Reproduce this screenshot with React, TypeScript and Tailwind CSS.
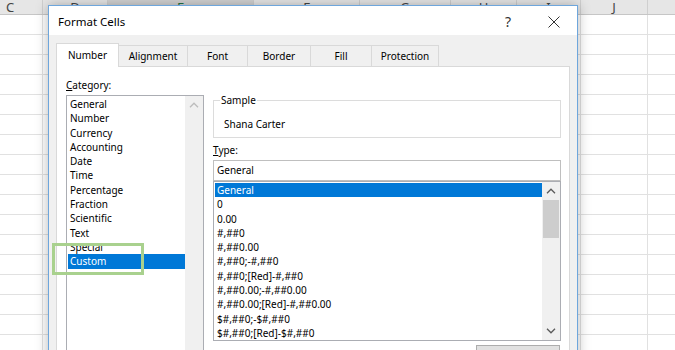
import React from 'react'
import clsx from 'clsx'

const columns = [
  { label: 'C', w: 'w-[43px]', left: true },
  { label: 'D', w: 'w-[65px]' },
  { label: 'E', w: 'w-[146px]', selected: true },
  { label: 'F', w: 'w-[106px]' },
  { label: 'G', w: 'w-[91px]' },
  { label: 'H', w: 'w-[66px]' },
  { label: 'I', w: 'w-[64px]' },
  { label: 'J', w: 'w-[67px]' },
  { label: 'K', w: 'w-[80px]' },
]

const tabs = [
  { label: 'Number', w: 'w-[63px]', active: true },
  { label: 'Alignment', w: 'w-[69px]' },
  { label: 'Font', w: 'w-[60px]' },
  { label: 'Border', w: 'w-[63px]' },
  { label: 'Fill', w: 'w-[61px]' },
  { label: 'Protection', w: 'w-[67px]' },
]

const categories = [
  'General', 'Number', 'Currency', 'Accounting', 'Date', 'Time',
  'Percentage', 'Fraction', 'Scientific', 'Text', 'Special', 'Custom',
]

const types = [
  'General', '0', '0.00', '#,##0', '#,##0.00', '#,##0;-#,##0',
  '#,##0;[Red]-#,##0', '#,##0.00;-#,##0.00', '#,##0.00;[Red]-#,##0.00',
  '$#,##0;-$#,##0', '$#,##0;[Red]-$#,##0', '$#,##0.00;-$#,##0.00',
]

const rows = Array.from({ length: 17 }, (_, i) => i)

function Chevron({ up, className }: { up?: boolean; className?: string }) {
  return (
    <svg width="10" height="6" viewBox="0 0 10 6" className={className}>
      <polyline
        points={up ? '1,5.2 5,1.2 9,5.2' : '1,0.8 5,4.8 9,0.8'}
        fill="none"
        stroke="currentColor"
        strokeWidth="1.3"
      />
    </svg>
  )
}

function Sheet() {
  return (
    <div>
      <div className="flex h-[15px] border-b border-[#c6c6c6] bg-[#e6e6e6]">
        {columns.map((c) => (
          <div
            key={c.label}
            className={clsx(
              c.w,
              'flex shrink-0 items-center border-r border-[#cfcfcf] text-[13px] leading-[14px] text-[#444]',
              c.left ? 'pl-[6px]' : 'justify-center',
              c.selected && 'bg-[#d2d2d2] text-[#217346]'
            )}
          >
            {c.label}
          </div>
        ))}
      </div>
      {rows.map((r) => (
        <div key={r} className="flex h-[20px] border-b border-[#e1e1e1]">
          {columns.map((c) => (
            <div key={c.label} className={clsx(c.w, 'shrink-0 border-r border-[#e1e1e1]')} />
          ))}
        </div>
      ))}
    </div>
  )
}

function ListBox({
  items,
  selected,
  className,
  arrowColor,
  thumb,
}: {
  items: string[]
  selected: number
  className?: string
  arrowColor: string
  thumb?: boolean
}) {
  return (
    <div className={clsx('flex overflow-hidden border border-[#abadb3] bg-white', className)}>
      <div className="flex-1 pl-[1px] pt-[1px]">
        {items.map((item, i) => (
          <div
            key={item}
            className={clsx(
              'h-[14.3px] whitespace-nowrap pl-[2px] leading-[14.3px]',
              i === selected ? 'bg-[#0078d7] text-white' : 'text-black'
            )}
          >
            {item}
          </div>
        ))}
      </div>
      <div className="flex w-[18px] shrink-0 flex-col bg-[#f0f0f0]">
        <div className="flex h-[18px] items-center justify-center">
          <Chevron up className={arrowColor} />
        </div>
        {thumb && <div className="mx-[1px] h-[38px] bg-[#cdcdcd]" />}
        <div className="flex-1" />
        {thumb && (
          <div className="flex h-[18px] items-center justify-center">
            <Chevron className={arrowColor} />
          </div>
        )}
      </div>
    </div>
  )
}

function NumberPanel() {
  return (
    <div className="flex flex-1 border border-[#d9d9d9] bg-white pl-[9px]">
      <div className="flex w-[138px] shrink-0 flex-col">
        <div className="mt-[11px] leading-[14px]">
          <span className="underline">C</span>ategory:
        </div>
        <ListBox
          items={categories}
          selected={11}
          className="mt-[3px] h-[300px]"
          arrowColor="text-[#bcbcbc]"
        />
      </div>
      <div className="ml-[9px] flex w-[348px] shrink-0 flex-col">
        <fieldset className="mt-[26px] border border-[#dcdcdc] pb-[6px] pl-[6px]">
          <legend className="px-[1px] leading-[14px]">Sample</legend>
          <div className="pl-[4px] pt-[10px] leading-[14px]">Shana Carter</div>
        </fieldset>
        <div className="mt-[5px] leading-[14px]">
          <span className="underline">T</span>ype:
        </div>
        <div className="mt-[3px] flex h-[21px] items-center border border-[#bfbfbf] pl-[3px]">
          General
        </div>
        <ListBox
          items={types}
          selected={0}
          className="h-[160px] border-[#a5a5a5]"
          arrowColor="text-[#5a5a5a]"
          thumb
        />
        <div className="mt-[4px] flex justify-end pr-[1px]">
          <div className="h-[23px] w-[84px] border border-[#adadad] bg-[#e1e1e1]" />
        </div>
      </div>
    </div>
  )
}

function FormatCellsDialog() {
  return (
    <div className="absolute left-[48px] top-[5px] flex h-[420px] w-[530px] flex-col border border-[#6ea6dc] bg-[#f0f0f0] shadow-[0_0_12px_rgba(0,0,0,0.28)]">
      <div className="flex h-[29px] shrink-0 items-center bg-white">
        <span className="pl-[9px] pt-[2px] text-[11.5px] text-black">Format Cells</span>
        <div className="ml-auto flex h-full">
          <div className="flex w-[46px] items-center justify-center pt-[2px] text-[14px] text-[#333]">?</div>
          <div className="flex w-[46px] items-center justify-center pt-[2px]">
            <svg width="12" height="12" viewBox="0 0 12 12">
              <path d="M0.5 0.5L11.5 11.5M11.5 0.5L0.5 11.5" stroke="#333" strokeWidth="1" />
            </svg>
          </div>
        </div>
      </div>
      <div className="flex flex-1 flex-col px-[7px] pt-[8px] text-[10px]">
        <div className="flex h-[23px] shrink-0 items-end">
          {tabs.map((t, i) => (
            <div
              key={t.label}
              className={clsx(
                t.w,
                'flex shrink-0 items-center justify-center border-r border-t border-[#d9d9d9] text-black',
                i === 0 && 'border-l',
                t.active
                  ? 'relative z-10 -mb-px h-[24px] bg-white pb-[1px]'
                  : 'h-[21px] bg-[#f0f0f0] pt-[1px]'
              )}
            >
              {t.label}
            </div>
          ))}
        </div>
        <NumberPanel />
      </div>
    </div>
  )
}

export default function App() {
  return (
    <div className="relative h-[350px] w-[675px] overflow-hidden bg-white font-['Segoe_UI','Noto_Sans',sans-serif]">
      <Sheet />
      <FormatCellsDialog />
      <div className="absolute left-[52px] top-[243px] h-[32px] w-[92px] border-[3px] border-[#a9d18e]" />
    </div>
  )
}
